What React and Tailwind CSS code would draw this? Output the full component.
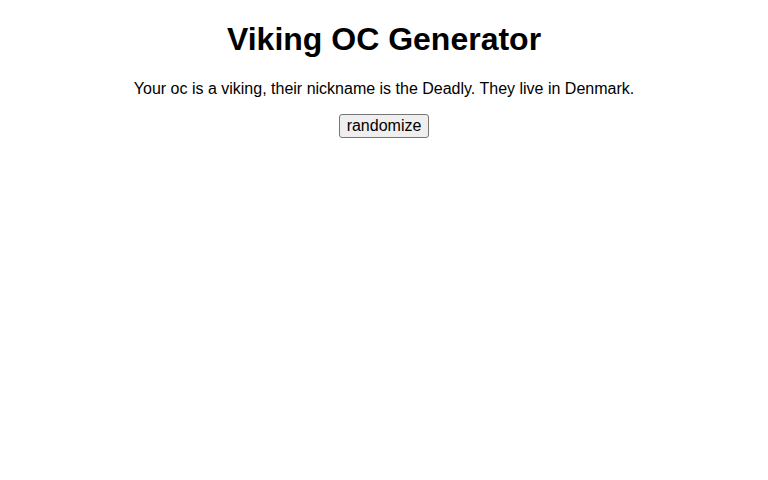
import { useState } from 'react';

const names = ['Deadly', 'Bold', 'Fearless', 'Red', 'Strong'];
const places = ['Denmark', 'Norway', 'Sweden', 'Iceland'];

const App = () => {
  const [nick, setNick] = useState('Deadly');
  const [place, setPlace] = useState('Denmark');

  const randomize = () => {
    setNick(names[Math.floor(Math.random() * names.length)]);
    setPlace(places[Math.floor(Math.random() * places.length)]);
  };

  return (
    <div className="min-h-[480px] bg-white text-center text-black font-['Liberation_Sans',Arial,sans-serif]">
      <h1 className="pt-[21px] text-[32px] font-bold leading-[37px]">Viking OC Generator</h1>
      <p className="mt-[22px] text-base leading-[18px]">
        Your oc is a viking, their nickname is the {nick}. They live in {place}.
      </p>
      <p className="mt-[16px]">
        <button
          onClick={randomize}
          className="h-[24px] px-[7px] text-base leading-[18px] bg-[#efefef] border border-[#767676] rounded-[3px] text-black"
        >
          randomize
        </button>
      </p>
    </div>
  );
};

export default App;
